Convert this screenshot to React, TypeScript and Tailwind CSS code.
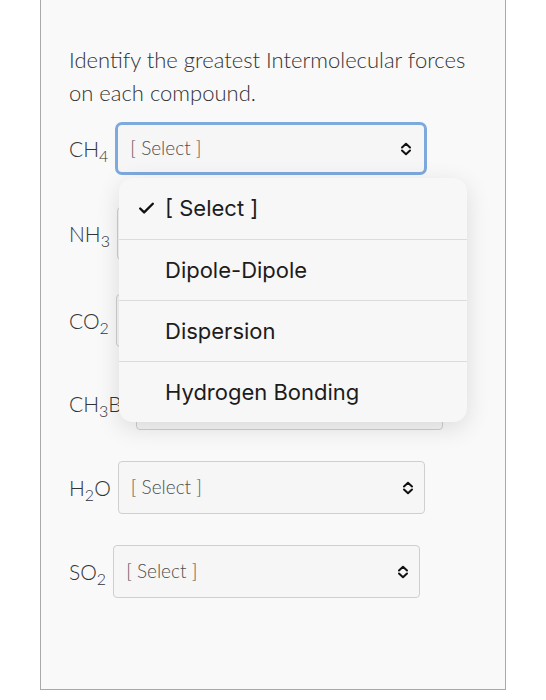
import { Check } from 'lucide-react'

const rows = [
  { id: 'ch4', base: 'CH', sub: '4', tail: '', mt: 'mt-[13px]', focused: true },
  { id: 'nh3', base: 'NH', sub: '3', tail: '', mt: 'mt-[32px]' },
  { id: 'co2', base: 'CO', sub: '2', tail: '', mt: 'mt-[34px]' },
  { id: 'ch3br', base: 'CH', sub: '3', tail: 'Br', mt: 'mt-[30px]' },
  { id: 'h2o', base: 'H', sub: '2', tail: 'O', mt: 'mt-[31px]' },
  { id: 'so2', base: 'SO', sub: '2', tail: '', mt: 'mt-[31px]' },
]

const options = ['[ Select ]', 'Dipole-Dipole', 'Dispersion', 'Hydrogen Bonding']

function Chevrons() {
  return (
    <svg width="12" height="14" viewBox="0 0 12 14" fill="none" stroke="#111" strokeWidth="2" strokeLinecap="round" strokeLinejoin="round">
      <path d="M2 5.5 L6 1.8 L10 5.5" />
      <path d="M2 8.5 L6 12.2 L10 8.5" />
    </svg>
  )
}

function SelectBox({ focused }: { focused?: boolean }) {
  return (
    <div
      className={`h-[53px] flex items-center justify-between pl-[12px] bg-[#f6f6f6] ${
        focused
          ? 'w-[312px] rounded-[7px] border-[3px] border-[#7ea9dd] pr-[12px]'
          : 'w-[307px] rounded-[4px] border border-[#cfcfcf] pr-[10px]'
      }`}
    >
      <span className="text-[19px] text-[#505050] font-light">[ Select ]</span>
      <Chevrons />
    </div>
  )
}

export default function App() {
  return (
    <main className="relative w-[546px] h-[700px] bg-white overflow-hidden" style={{ fontFamily: 'Lato, "Open Sans", sans-serif' }}>
      <div className="ml-[40px] w-[466px] h-[690px] border-x border-b border-[#a9a9a9] bg-[#f9f9f9] pl-[28px] pt-[43px]">
        <p className="text-[22px] leading-[33px] text-[#333] font-light w-[420px]">
          Identify the greatest Intermolecular forces on each compound.
        </p>

        {rows.map(r => (
          <div key={r.id} className={`flex items-center ${r.mt}`}>
            <span className="text-[21px] text-[#333] font-light">
              {r.base}
              <sub className="text-[16px] bottom-[-5px]">{r.sub}</sub>
              {r.tail}
            </span>
            <div className="ml-[7px]">
              <SelectBox focused={r.focused} />
            </div>
          </div>
        ))}
      </div>

      {/* Open dropdown menu */}
      <div
        className="absolute left-[119px] top-[178px] w-[348px] rounded-[14px] bg-[#f7f7f7] shadow-[0_6px_24px_rgba(0,0,0,0.12)] overflow-hidden"
        style={{ fontFamily: 'Inter, "Liberation Sans", sans-serif' }}
      >
        {options.map((o, i) => (
          <div
            key={o}
            className={`h-[61px] flex items-center ${i > 0 ? 'border-t border-[#dcdcdc]' : ''}`}
          >
            <div className="w-[46px] flex justify-end pr-[9px]">
              {i === 0 && <Check className="w-[19px] h-[19px] text-[#111]" strokeWidth={3} />}
            </div>
            <span className="text-[22px] text-[#1c1c1c]">{o}</span>
          </div>
        ))}
      </div>
    </main>
  )
}
